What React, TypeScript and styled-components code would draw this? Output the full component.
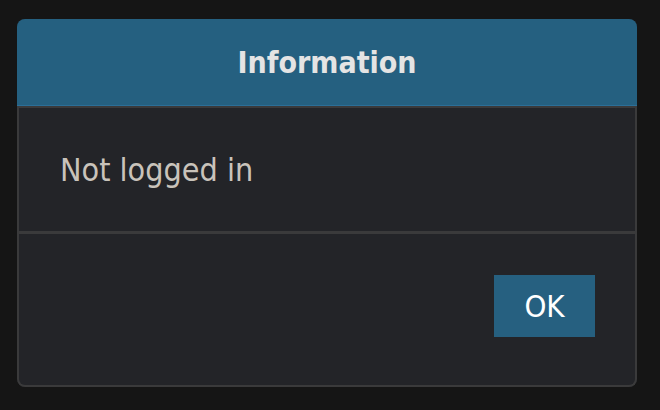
import styled, { createGlobalStyle } from "styled-components";

const GlobalStyle = createGlobalStyle`
  html, body {
    margin: 0;
    padding: 0;
    background: #151515;
  }
  body {
    font-family: "DejaVu Sans Condensed", "DejaVu Sans", sans-serif;
  }
`;

const Page = styled.div`
  width: 660px;
  height: 410px;
  padding: 19px 0 0 17px;
  box-sizing: border-box;
`;

const Dialog = styled.div`
  width: 620px;
  display: flex;
  flex-direction: column;
  background: #232428;
  border-radius: 8px;
`;

const Header = styled.div`
  height: 86px;
  display: flex;
  align-items: center;
  justify-content: center;
  background: #256080;
  border-bottom: 1px solid #2b6f98;
  border-radius: 8px 8px 0 0;
  color: #e4e4e4;
  font-size: 30px;
  font-weight: bold;
`;

const Body = styled.div`
  height: 123px;
  display: flex;
  align-items: center;
  padding-left: 41px;
  border: 2px solid #3a3a3b;
  border-bottom-width: 3px;
  color: #c9c3bb;
  font-size: 32px;
`;

const Footer = styled.div`
  height: 153px;
  display: flex;
  justify-content: flex-end;
  align-items: flex-start;
  padding: 41px 40px 0 0;
  box-sizing: border-box;
  border: 2px solid #3a3a3b;
  border-top: none;
  border-radius: 0 0 8px 8px;
`;

const Button = styled.button`
  width: 101px;
  height: 62px;
  padding: 0;
  border: none;
  background: #266080;
  color: #ffffff;
  font-family: inherit;
  font-size: 31px;
  cursor: pointer;
`;

export default function App() {
  return (
    <Page>
      <GlobalStyle />
      <Dialog>
        <Header>Information</Header>
        <Body>Not logged in</Body>
        <Footer>
          <Button>OK</Button>
        </Footer>
      </Dialog>
    </Page>
  );
}
